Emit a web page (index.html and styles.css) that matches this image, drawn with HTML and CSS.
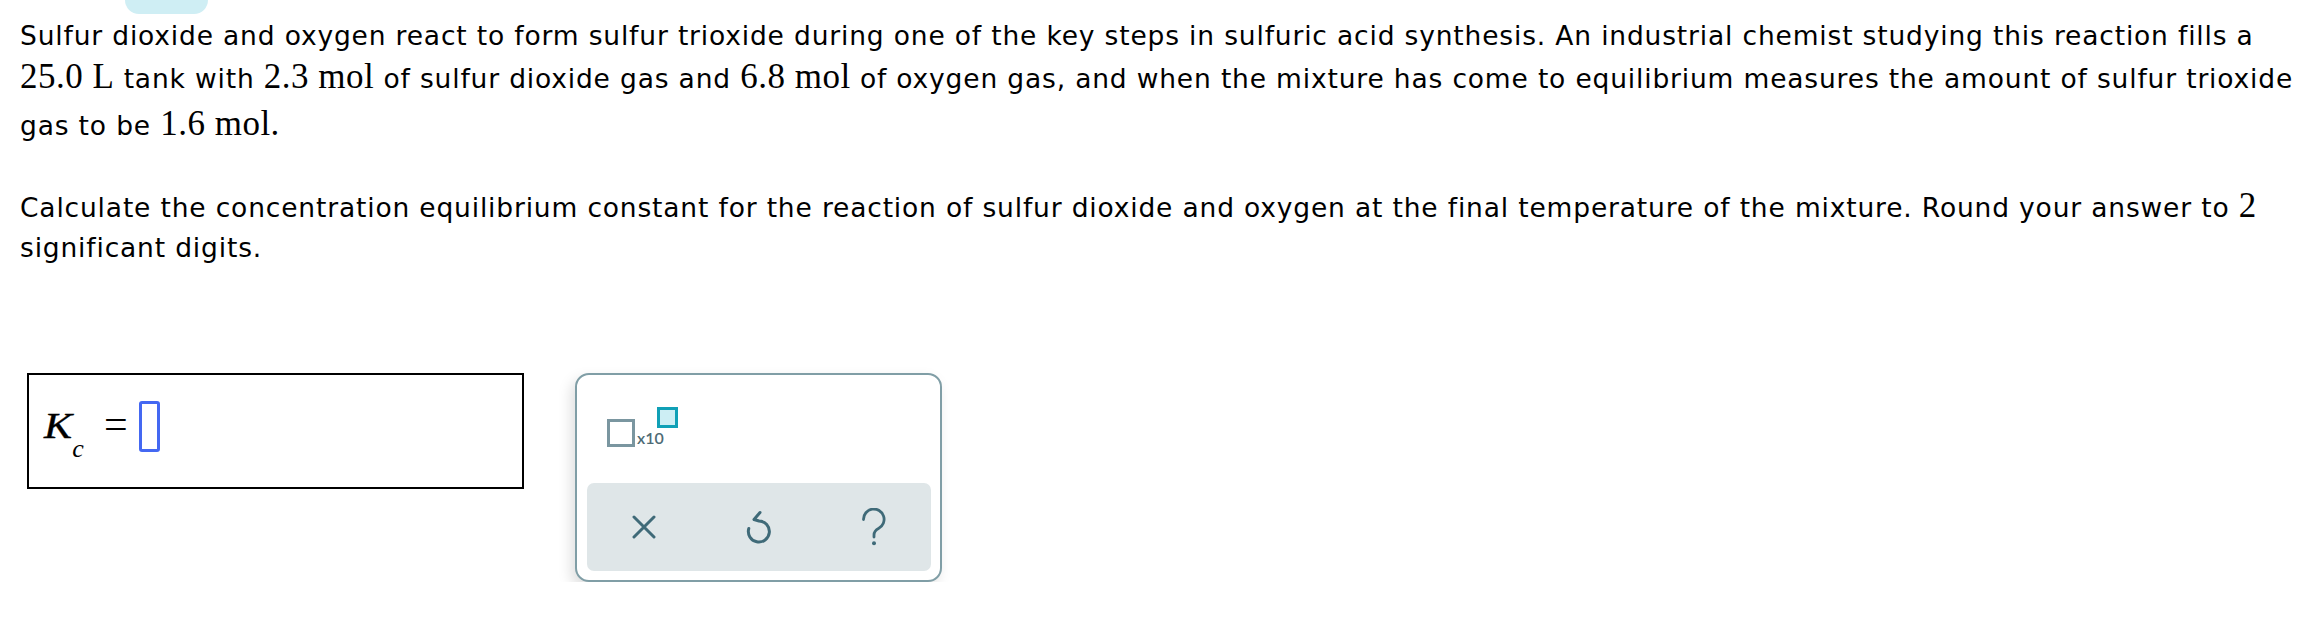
FILE: index.html
```html
<!DOCTYPE html>
<html lang="en">
<head>
<meta charset="utf-8">
<title>Equilibrium constant question</title>
<link rel="stylesheet" href="styles.css">
</head>
<body>
<div class="tab"></div>
<div class="question">
  <p class="para para-first"><span class="line">Sulfur dioxide and oxygen react to form sulfur trioxide during one of the key steps in sulfuric acid synthesis. An industrial chemist studying this reaction fills a</span><span class="line"><span class="num">25.0 L</span> tank with <span class="num">2.3 mol</span> of sulfur dioxide gas and <span class="num">6.8 mol</span> of oxygen gas, and when the mixture has come to equilibrium measures the amount of sulfur trioxide</span><span class="line line-last">gas to be <span class="num">1.6 mol.</span></span></p>
  <p class="para para-second"><span class="line">Calculate the concentration equilibrium constant for the reaction of sulfur dioxide and oxygen at the final temperature of the mixture. Round your answer to <span class="num">2</span></span><span class="line">significant digits.</span></p>
</div>
<div class="answer-row">
  <div class="answer-box"><span class="k">K</span><span class="sub">c</span><span class="eq">=</span><span class="slot"></span></div>
  <div class="palette">
    <div class="palette-top">
      <div class="sci">
        <span class="sci-base"></span>
        <span class="sci-text">x10</span>
        <span class="sci-exp"></span>
      </div>
    </div>
    <div class="palette-bar">
      <div class="tool">
        <svg width="24" height="24" viewBox="0 0 24 24" fill="none" stroke="#3f6a78" stroke-width="3" stroke-linecap="round"><path d="M2 2 L22 22 M22 2 L2 22"/></svg>
      </div>
      <div class="tool">
        <svg width="28" height="34" viewBox="0 0 28 34" fill="none" stroke="#3f6a78" stroke-width="3" stroke-linecap="round" stroke-linejoin="round"><path d="M15 2.5 L9 9.5 L14 11 A10.5 10.5 0 1 1 3.8 18.5"/></svg>
      </div>
      <div class="tool">
        <svg width="26" height="38" viewBox="0 0 26 38" fill="none" stroke="#3f6a78" stroke-width="2.8" stroke-linecap="round"><path d="M2.5 11.5 A10.3 10.3 0 1 1 17.5 20.5 Q13 23 13 27 V29"/><circle cx="13" cy="35.3" r="2" fill="#3f6a78" stroke="none"/></svg>
      </div>
    </div>
  </div>
</div>
</body>
</html>
```
FILE: styles.css
```css
html, body {
  margin: 0;
  padding: 0;
  background: #ffffff;
}

body {
  font-family: "DejaVu Sans", Verdana, sans-serif;
  color: #000000;
}

.tab {
  margin-left: 125px;
  width: 83px;
  height: 14px;
  background: #cfeef4;
  border-radius: 0 0 14px 14px;
}

.question {
  padding: 0 20px;
}

.para {
  margin: 0;
  font-size: 26.5px;
  letter-spacing: 0.83px;
  white-space: nowrap;
}

.line {
  display: block;
}

.para-first {
  line-height: 43px;
  margin-top: 0;
}

.para-first .line-last {
  margin-top: 4px;
}

.para-second {
  line-height: 40px;
  margin-top: 41px;
}

.num {
  font-family: "Liberation Serif", "Times New Roman", serif;
  font-size: 35px;
  letter-spacing: 0.5px;
  line-height: 30px;
}

.answer-row {
  display: flex;
  align-items: flex-start;
  margin-top: 105px;
  padding-left: 27px;
}

.answer-box {
  box-sizing: border-box;
  width: 497px;
  height: 116px;
  border: 2px solid #000000;
  padding: 19px 0 0 15px;
  font-family: "Liberation Serif", "Times New Roman", serif;
  font-size: 34px;
  line-height: 60px;
  white-space: nowrap;
}

.k {
  display: inline-block;
  font-style: italic;
  font-size: 35px;
  -webkit-text-stroke: 0.4px #000000;
  transform: scaleX(1.2);
  transform-origin: left bottom;
}

.sub {
  font-style: italic;
  font-size: 26px;
  line-height: 26px;
  vertical-align: -19px;
  margin-left: 5px;
}

.eq {
  font-size: 42px;
  margin-left: 20px;
}

.slot {
  display: inline-block;
  box-sizing: border-box;
  width: 21px;
  height: 51px;
  border: 3px solid #4468f2;
  border-radius: 3px;
  margin-left: 11px;
  vertical-align: -14px;
}

.palette {
  box-sizing: border-box;
  width: 367px;
  height: 209px;
  margin-left: 51px;
  border: 2px solid #809ea6;
  border-radius: 14px;
  background: #ffffff;
  box-shadow: -4px 6px 14px rgba(0, 0, 0, 0.13);
  display: flex;
  flex-direction: column;
  padding: 0 9px 9px 10px;
}

.palette-top {
  flex: 1;
  padding: 32px 0 0 20px;
}

.sci {
  display: flex;
  align-items: flex-start;
}

.sci-base {
  box-sizing: border-box;
  width: 28px;
  height: 28px;
  border: 3px solid #7a96a0;
  margin-top: 12px;
}

.sci-text {
  font-family: Lato, "Open Sans", sans-serif;
  font-size: 16px;
  font-weight: 600;
  line-height: 16px;
  color: #4e6b75;
  margin-top: 23px;
  margin-left: 2px;
}

.sci-exp {
  box-sizing: border-box;
  width: 21px;
  height: 21px;
  border: 3px solid #10a0b6;
  background: #cdeef4;
  margin-left: -7px;
}

.palette-bar {
  height: 88px;
  background: #dfe6e8;
  border-radius: 7px;
  display: flex;
  align-items: center;
}

.tool {
  flex: 1;
  display: flex;
  justify-content: center;
  align-items: center;
}

.tool svg {
  display: block;
}
```
